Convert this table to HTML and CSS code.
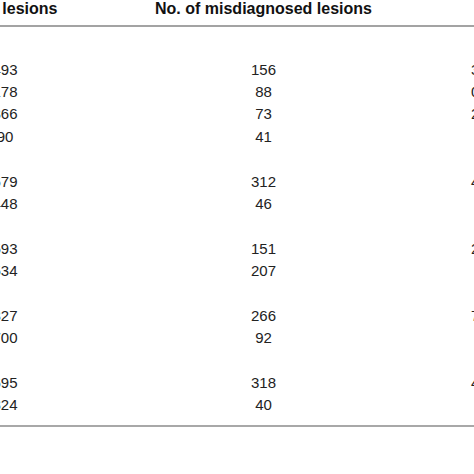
FILE: index.html
```html
<!DOCTYPE html>
<html>
<head>
<meta charset="utf-8">
<link rel="stylesheet" href="styles.css">
</head>
<body>
<div class="viewport">
  <div class="table">
    <div class="head">
      <div class="cell">No. of lesions</div>
      <div class="cell">No. of misdiagnosed lesions</div>
      <div class="cell"></div>
    </div>
    <div class="body">
      <div class="row"><div class="cell"></div><div class="cell"></div><div class="cell"></div></div>
      <div class="row"><div class="cell">493</div><div class="cell">156</div><div class="cell">31.6</div></div>
      <div class="row"><div class="cell">178</div><div class="cell">88</div><div class="cell">0.49</div></div>
      <div class="row"><div class="cell">366</div><div class="cell">73</div><div class="cell">20.0</div></div>
      <div class="row"><div class="cell">90</div><div class="cell">41</div><div class="cell">4.5</div></div>
      <div class="row"><div class="cell"></div><div class="cell"></div><div class="cell"></div></div>
      <div class="row"><div class="cell">679</div><div class="cell">312</div><div class="cell">45.9</div></div>
      <div class="row"><div class="cell">448</div><div class="cell">46</div><div class="cell">1.0</div></div>
      <div class="row"><div class="cell"></div><div class="cell"></div><div class="cell"></div></div>
      <div class="row"><div class="cell">593</div><div class="cell">151</div><div class="cell">25.5</div></div>
      <div class="row"><div class="cell">534</div><div class="cell">207</div><div class="cell">3.9</div></div>
      <div class="row"><div class="cell"></div><div class="cell"></div><div class="cell"></div></div>
      <div class="row"><div class="cell">327</div><div class="cell">266</div><div class="cell">79.1</div></div>
      <div class="row"><div class="cell">700</div><div class="cell">92</div><div class="cell">1.3</div></div>
      <div class="row"><div class="cell"></div><div class="cell"></div><div class="cell"></div></div>
      <div class="row"><div class="cell">695</div><div class="cell">318</div><div class="cell">45.8</div></div>
      <div class="row"><div class="cell">824</div><div class="cell">40</div><div class="cell">4.9</div></div>
    </div>
  </div>
</div>
</body>
</html>
```
FILE: styles.css
```css
html, body {
  margin: 0;
  padding: 0;
  background: #ffffff;
}
.viewport {
  width: 474px;
  height: 474px;
  overflow: hidden;
}
.table {
  margin-left: -105px;
  width: 664px;
  font-family: "Liberation Sans", Arial, sans-serif;
}
.head, .row {
  display: grid;
  grid-template-columns: 220px 297px 147px;
  text-align: center;
}
.head {
  font-size: 16px;
  font-weight: bold;
  line-height: 18px;
  color: #111111;
  padding-bottom: 7px;
  border-bottom: 2px solid #a3a3a3;
  white-space: nowrap;
}
.body {
  padding-top: 9.2px;
  padding-bottom: 7.7px;
  border-bottom: 2px solid #a8a8a8;
}
.row {
  font-size: 15px;
  line-height: 22.4px;
  height: 22.4px;
  color: #222222;
}
.cell {
  white-space: nowrap;
}
```
